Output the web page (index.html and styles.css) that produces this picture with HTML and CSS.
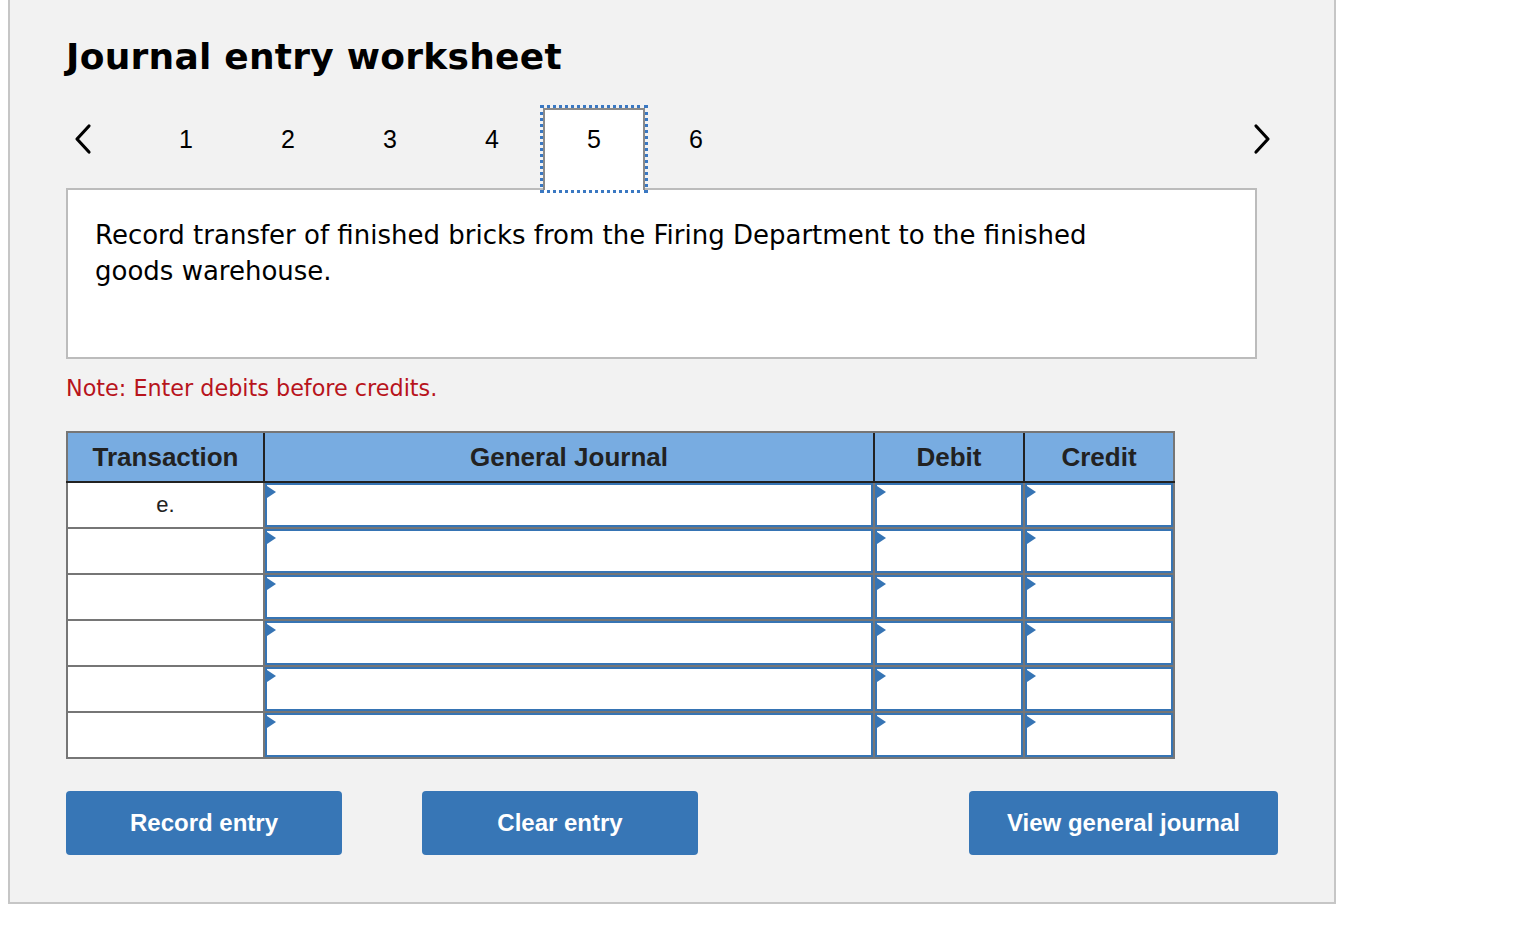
FILE: index.html
```html
<!DOCTYPE html>
<html lang="en">
<head>
<meta charset="utf-8">
<title>Journal entry worksheet</title>
<link rel="stylesheet" href="styles.css">
</head>
<body>
<div class="panel">
  <h1 class="title">Journal entry worksheet</h1>

  <div class="nav">
    <div class="chev chev-left">
      <svg width="22" height="32" viewBox="0 0 22 32"><polyline points="17,3 5,16 17,29" fill="none" stroke="#000" stroke-width="3.2" stroke-linecap="round" stroke-linejoin="round"/></svg>
    </div>
    <div class="tab">1</div>
    <div class="tab">2</div>
    <div class="tab">3</div>
    <div class="tab">4</div>
    <div class="tab tab-active">5</div>
    <div class="tab">6</div>
    <div class="chev chev-right">
      <svg width="22" height="32" viewBox="0 0 22 32"><polyline points="5,3 17,16 5,29" fill="none" stroke="#000" stroke-width="3.2" stroke-linecap="round" stroke-linejoin="round"/></svg>
    </div>
  </div>

  <div class="prompt">
    <p>Record transfer of finished bricks from the Firing Department to the finished goods warehouse.</p>
  </div>

  <p class="note">Note: Enter debits before credits.</p>

  <table class="journal">
    <colgroup>
      <col class="c-trans">
      <col class="c-gj">
      <col class="c-amt">
      <col class="c-amt">
    </colgroup>
    <thead>
      <tr>
        <th>Transaction</th>
        <th>General Journal</th>
        <th>Debit</th>
        <th>Credit</th>
      </tr>
    </thead>
    <tbody>
      <tr>
        <td class="trans">e.</td>
        <td class="inp"><div class="field"><span class="flag"></span></div></td>
        <td class="inp"><div class="field"><span class="flag"></span></div></td>
        <td class="inp"><div class="field"><span class="flag"></span></div></td>
      </tr>
      <tr>
        <td class="trans"></td>
        <td class="inp"><div class="field"><span class="flag"></span></div></td>
        <td class="inp"><div class="field"><span class="flag"></span></div></td>
        <td class="inp"><div class="field"><span class="flag"></span></div></td>
      </tr>
      <tr>
        <td class="trans"></td>
        <td class="inp"><div class="field"><span class="flag"></span></div></td>
        <td class="inp"><div class="field"><span class="flag"></span></div></td>
        <td class="inp"><div class="field"><span class="flag"></span></div></td>
      </tr>
      <tr>
        <td class="trans"></td>
        <td class="inp"><div class="field"><span class="flag"></span></div></td>
        <td class="inp"><div class="field"><span class="flag"></span></div></td>
        <td class="inp"><div class="field"><span class="flag"></span></div></td>
      </tr>
      <tr>
        <td class="trans"></td>
        <td class="inp"><div class="field"><span class="flag"></span></div></td>
        <td class="inp"><div class="field"><span class="flag"></span></div></td>
        <td class="inp"><div class="field"><span class="flag"></span></div></td>
      </tr>
      <tr>
        <td class="trans"></td>
        <td class="inp"><div class="field"><span class="flag"></span></div></td>
        <td class="inp"><div class="field"><span class="flag"></span></div></td>
        <td class="inp"><div class="field"><span class="flag"></span></div></td>
      </tr>
    </tbody>
  </table>

  <div class="actions">
    <button class="btn btn-record">Record entry</button>
    <button class="btn btn-clear">Clear entry</button>
    <button class="btn btn-view">View general journal</button>
  </div>
</div>
</body>
</html>
```

FILE: styles.css
```css
html, body {
  margin: 0;
  padding: 0;
  background: #ffffff;
}

body {
  font-family: "DejaVu Sans", Verdana, sans-serif;
  color: #000;
}

.panel {
  box-sizing: border-box;
  margin-left: 8px;
  width: 1328px;
  height: 904px;
  background: #f2f2f2;
  border: 2px solid #c6c6c6;
  border-top: none;
  padding: 36px 0 0 56px;
}

.title {
  margin: 0;
  font-family: "DejaVu Sans", Verdana, sans-serif;
  font-weight: bold;
  font-size: 36px;
  line-height: 41px;
  letter-spacing: 0.25px;
  color: #000;
}

.nav {
  display: flex;
  align-items: flex-start;
  width: 1214px;
  height: 82px;
  margin-top: 31px;
  margin-bottom: -2px;
}

.chev {
  display: flex;
  justify-content: center;
  padding-top: 15px;
}

.chev-left {
  width: 34px;
  margin-right: 35px;
}

.chev-right {
  width: 36px;
  margin-left: auto;
}

.tab {
  box-sizing: border-box;
  width: 102px;
  height: 82px;
  padding-top: 14px;
  text-align: center;
  font-family: "Liberation Sans", Arial, sans-serif;
  font-size: 25px;
  line-height: 30px;
  color: #000;
  border: 2px solid transparent;
  border-bottom: none;
}

.tab-active {
  position: relative;
  z-index: 1;
  background: #ffffff;
  border-color: #8a8a8a;
  outline: 3px dotted #3a78c2;
  outline-offset: 0;
}

.prompt {
  box-sizing: border-box;
  width: 1191px;
  height: 171px;
  background: #ffffff;
  border: 2px solid #bcbcbc;
  padding: 27px 40px 0 27px;
}

.prompt p {
  margin: 0;
  font-size: 26px;
  line-height: 36px;
  color: #000;
  max-width: 1040px;
}

.note {
  margin: 16px 0 0 0;
  font-size: 22.3px;
  line-height: 26px;
  color: #b8141c;
}

.journal {
  margin-top: 30px;
  border-collapse: collapse;
  table-layout: fixed;
  width: 1107px;
  border: 2px solid #767676;
}

.c-trans { width: 197px; }
.c-gj { width: 610px; }
.c-amt { width: 150px; }

.journal th {
  height: 48px;
  padding: 0;
  background: #78ace1;
  font-family: "Liberation Sans", Arial, sans-serif;
  font-weight: bold;
  font-size: 26px;
  color: #222;
  text-align: center;
  border-left: 2px solid #222;
  border-bottom: 2px solid #222;
  border-top: 2px solid #767676;
}

.journal th:first-child {
  border-left: 2px solid #767676;
}

.journal td {
  height: 44px;
  padding: 0;
  border: 2px solid #767676;
  background: #ffffff;
}

.journal td.trans {
  text-align: center;
  font-family: "Liberation Sans", Arial, sans-serif;
  font-size: 22px;
  color: #222;
}

.field {
  box-sizing: border-box;
  height: 44px;
  border: 2px solid #3674b4;
  padding-top: 1px;
  background: #fff;
}

.flag {
  display: block;
  width: 0;
  height: 0;
  border-left: 9px solid #3674b4;
  border-top: 6px solid transparent;
  border-bottom: 6px solid transparent;
}

.actions {
  display: flex;
  margin-top: 32px;
}

.btn {
  box-sizing: border-box;
  height: 64px;
  border: none;
  border-radius: 4px;
  background: #3776b6;
  color: #ffffff;
  font-family: "Liberation Sans", Arial, sans-serif;
  font-weight: bold;
  font-size: 24px;
  padding: 0;
  cursor: pointer;
}

.btn-record { width: 276px; }
.btn-clear { width: 276px; margin-left: 80px; }
.btn-view { width: 309px; margin-left: 271px; }
```
